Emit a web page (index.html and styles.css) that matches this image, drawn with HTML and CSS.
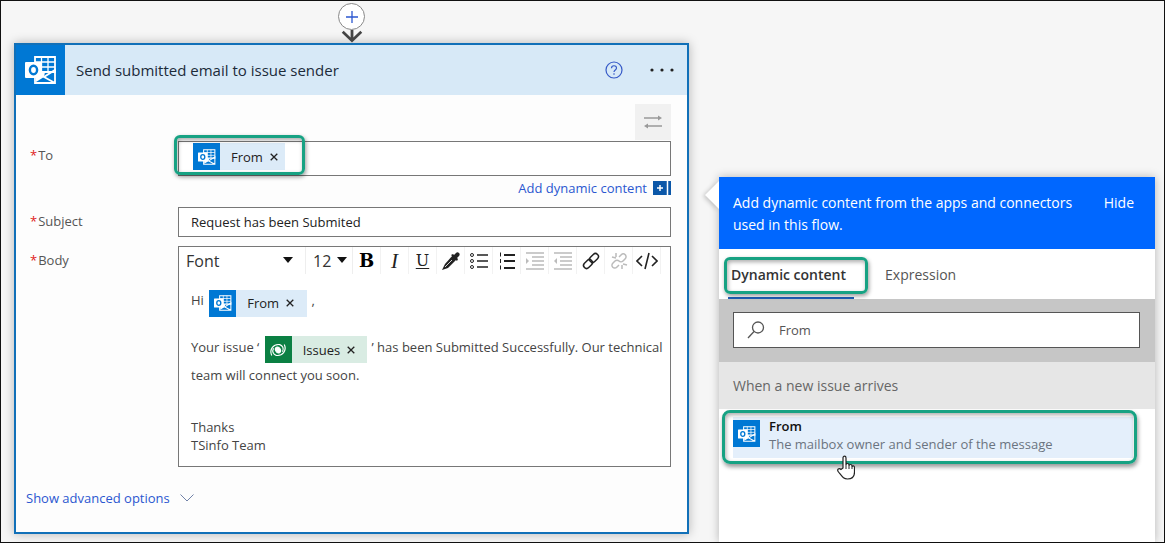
FILE: index.html
```html
<!DOCTYPE html>
<html lang="en">
<head>
<meta charset="utf-8">
<title>Send submitted email to issue sender</title>
<link rel="stylesheet" href="styles.css">
</head>
<body>
<svg class="sprite" aria-hidden="true">
  <symbol id="outlook" viewBox="0 0 32 32">
    <path d="M10 3h20v15H10z" fill="none" stroke="currentColor" stroke-width="1.800"/>
    <path d="M10 8h20M10 13h20M16.500 3v15M23 3v15" stroke="currentColor" stroke-width="1.300" fill="none"/>
    <path d="M10 18v11h20V16l-11 7 11 6" fill="none" stroke="currentColor" stroke-width="1.800"/>
    <path d="M11 18h9l-1 5-8 5z" fill="currentColor"/>
    <rect x="0" y="8" width="17" height="16" rx="1" fill="currentColor"/>
    <ellipse cx="8.500" cy="16" rx="3.600" ry="4.200" fill="none" stroke="var(--tile)" stroke-width="2.400"/>
  </symbol>
  <symbol id="cross" viewBox="0 0 8 8"><path d="M.7.7l6.600 6.600M7.300.7L.7 7.300" stroke="currentColor" stroke-width="1.300"/></symbol>
</svg>
<div class="canvas">
  <main class="flow">
    <div class="connector">
      <button class="add-step" aria-label="Insert a new step"><svg viewBox="0 0 12 12"><path d="M6 0v12M0 6h12" stroke="currentColor" stroke-width="1.300"/></svg></button>
      <svg class="arrow" viewBox="0 0 24 14"><path d="M12 0v11M2 2l10 9.500L22 2" fill="none" stroke="currentColor" stroke-width="3"/></svg>
    </div>
    <section class="card">
      <header class="card-head">
        <span class="tile tile-large"><svg><use href="#outlook"/></svg></span>
        <h1>Send submitted email to issue sender</h1>
        <button class="plain help" aria-label="Help"><svg viewBox="0 0 18 18" fill="none" stroke="currentColor" stroke-width="1.200"><circle cx="9" cy="9" r="8"/><path d="M6.500 7.200C6.500 4 11.500 4 11.500 7c0 2-2.500 1.900-2.500 4"/><path d="M9 12.300v1.500"/></svg></button>
        <button class="plain more" aria-label="More"><svg viewBox="0 0 24 4" fill="currentColor"><circle cx="2" cy="2" r="1.600"/><circle cx="12" cy="2" r="1.600"/><circle cx="22" cy="2" r="1.600"/></svg></button>
      </header>
      <div class="card-body">
        <div class="tools"><button class="swap" aria-label="Switch input mode"><svg viewBox="0 0 20 14" fill="none" stroke="currentColor" stroke-width="1.300"><path d="M1 3h16M3 11h16"/><path d="M15 .5L19 3l-4 2.500zM5 8.500L1 11l4 2.500z" fill="currentColor" stroke="none"/></svg></button></div>
        <div class="row">
          <span class="label"><i>*</i>To</span>
          <div class="field to-field" role="group" aria-label="To">
            <span class="token"><span class="tile"><svg><use href="#outlook"/></svg></span><span class="token-text">From</span><button class="plain remove" aria-label="Remove From"><svg><use href="#cross"/></svg></button></span>
          </div>
        </div>
        <div class="dynamic"><a href="#dynamic">Add dynamic content<svg viewBox="0 0 18 14"><path d="M0 0h18v14H0z" fill="#0b57a8"/><path d="M14.500 0v14" stroke="#fff" stroke-width="1.500"/><path d="M7 4v6M4 7h6" stroke="#fff" stroke-width="1.500"/></svg></a></div>
        <div class="row subject-row">
          <label class="label" for="subject"><i>*</i>Subject</label>
          <input class="field subject" id="subject" type="text" value="Request has been Submited">
        </div>
        <div class="row">
          <span class="label"><i>*</i>Body</span>
          <div class="field editor">
            <div class="toolbar">
              <span class="pick pick-font"><select aria-label="Font"><option>Font</option></select></span>
              <span class="pick pick-size"><select aria-label="Font size"><option>12</option></select></span>
              <button class="tool glyph bold" aria-label="Bold">B</button>
              <button class="tool glyph italic" aria-label="Italic">I</button>
              <button class="tool glyph underline" aria-label="Underline">U</button>
              <button class="tool" aria-label="Text color"><svg viewBox="0 0 20 20"><path d="M1 19l3-1 3-1L16 8l-4-4L4 13z" fill="currentColor"/><path d="M4 16L11 9" stroke="#fff" stroke-width=".8"/><path d="M10 4l6 6 1-2-1-1 2-2c2-2-1-5-3-3l-2 2-1-1z" fill="currentColor"/></svg></button>
              <button class="tool" aria-label="Bulleted list"><svg viewBox="0 0 20 20" fill="none" stroke="currentColor"><circle cx="3" cy="4" r="1.500"/><circle cx="3" cy="10" r="1.500"/><circle cx="3" cy="16" r="1.500"/><path d="M8 4h11M8 10h11M8 16h11" stroke-width="1.300"/></svg></button>
              <button class="tool" aria-label="Numbered list"><svg viewBox="0 0 20 20" fill="none" stroke="currentColor"><path d="M3.500 1.500v4M3.500 8v4M3.500 14.500v4"/><path d="M7 4h11M7 10h11M7 17h11" stroke-width="2"/></svg></button>
              <button class="tool off" aria-label="Outdent"><svg viewBox="0 0 20 20" fill="none" stroke="currentColor" stroke-width="1.500"><path d="M1 2h18M7 6h12M7 10h12M7 14h12M1 18h18"/><path d="M1 7l3 3-3 3z" fill="currentColor" stroke="none"/></svg></button>
              <button class="tool off" aria-label="Indent"><svg viewBox="0 0 20 20" fill="none" stroke="currentColor" stroke-width="1.500"><path d="M1 2h18M7 6h12M7 10h12M7 14h12M1 18h18"/><path d="M4 7l-3 3 3 3z" fill="currentColor" stroke="none"/></svg></button>
              <button class="tool" aria-label="Link"><svg viewBox="0 0 20 20" fill="none" stroke="currentColor" stroke-width="1.500"><rect x="-5" y="-3" width="10" height="6" rx="3" transform="translate(13 7) rotate(-45)"/><rect x="-5" y="-3" width="10" height="6" rx="3" transform="translate(7 13) rotate(-45)"/></svg></button>
              <button class="tool off" aria-label="Remove link"><svg viewBox="0 0 20 20" fill="none" stroke="currentColor" stroke-width="1.500"><path d="M10 6l2-2c3-3 7 1 4 4l-2 2c-1 1-3 1-4 0M10 14l-2 2c-3 3-7-1-4-4l2-2c1-1 3-1 4 0M3 6l4 1M7 2v4M13 14v4M14 13l4 1"/></svg></button>
              <button class="tool" aria-label="Code view"><svg class="code" viewBox="0 0 22 20" fill="none" stroke="currentColor" stroke-width="1.600"><path d="M6 5l-5 5 5 5M16 5l5 5-5 5M13 2L9 18"/></svg></button>
            </div>
            <div class="message" contenteditable="true" spellcheck="false" role="textbox" aria-label="Body">
              <p class="greeting">Hi <span class="token" contenteditable="false"><span class="tile"><svg><use href="#outlook"/></svg></span><span class="token-text">From</span><button class="plain remove" aria-label="Remove From"><svg><use href="#cross"/></svg></button></span> ,</p>
              <p class="detail">Your issue ‘ <span class="token token-green" contenteditable="false"><span class="tile"><svg viewBox="0 0 20 20" fill="none" stroke="currentColor" stroke-width="1.300"><path d="M3 16C0 9 5 3 12 4c3 1 5 4 3 8M17 4c3 7-2 13-9 12-3-1-5-4-3-8"/><ellipse cx="10" cy="10" rx="2.600" ry="3.400" transform="rotate(-30 10 10)" fill="currentColor"/></svg></span><span class="token-text">Issues</span><button class="plain remove" aria-label="Remove Issues"><svg><use href="#cross"/></svg></button></span> ’ has been Submitted Successfully. Our technical team will connect you soon.</p>
              <p>Thanks<br>TSinfo Team</p>
            </div>
          </div>
        </div>
        <a class="advanced" href="#advanced">Show advanced options<svg viewBox="0 0 14 8" fill="none" stroke="currentColor"><path d="M.5.5L7 7 13.500.5"/></svg></a>
      </div>
    </section>
  </main>
  <aside class="panel" id="dynamic">
    <header class="panel-head"><p>Add dynamic content from the apps and connectors used in this flow.</p><button class="plain">Hide</button></header>
    <nav class="tabs"><button class="plain tab current">Dynamic content</button><button class="plain tab">Expression</button></nav>
    <div class="search"><label class="search-box"><svg viewBox="0 0 18 18" fill="none" stroke="currentColor" stroke-width="1.300"><circle cx="11" cy="6.500" r="5.500"/><path d="M7 10.500L1 17"/></svg><input type="text" value="From" aria-label="Search dynamic content"></label></div>
    <h2>When a new issue arrives</h2>
    <button class="plain result">
      <span class="tile"><svg><use href="#outlook"/></svg></span>
      <span class="result-text"><b>From</b><span>The mailbox owner and sender of the message</span></span>
      <svg class="pointer" viewBox="0 0 18 25"><path d="M6 13V3c0-2.500 3-2.500 3 0v7c0-2 3-2 3 0v1c0-2 3-2 3 0v1c0-1.500 2.500-1.500 2.500.5V17c0 5-3 7-7 7-4 0-5-2-9-7-2-2.500.5-4.500 2.500-2.500z" fill="#fff" stroke="#222" stroke-width="1.200"/><path d="M9 10v4M12 11v3M15 12v2" stroke="#222"/></svg>
    </button>
  </aside>
</div>
</body>
</html>
```
FILE: styles.css
```css
:root {
  --blue: #0078d4;
  --link: #2b57d0;
  --mark: #17a283;
}
*, *::before, *::after { box-sizing: border-box; }
body {
  margin: 0;
  font-family: "Open Sans", "Noto Sans", sans-serif;
  font-size: 13px;
  color: #333;
}
h1, h2, p { margin: 0; font-weight: 400; }
button, input, select { font: inherit; color: inherit; }
button { cursor: pointer; }
svg { display: block; flex: none; }
a { color: var(--link); text-decoration: none; }
.sprite { position: absolute; width: 0; height: 0; }
.plain { border: 0; padding: 0; background: none; }

.canvas {
  display: flex;
  gap: 30px;
  min-height: 100vh;
  padding: 0 9px 0 13px;
  border: 1px solid #111;
  background: #f6f6f6;
}
.flow { flex: 1; min-width: 0; padding-bottom: 8px; }
.connector {
  display: flex;
  flex-direction: column;
  align-items: center;
  height: 42px;
  padding-top: 2px;
  color: #444;
}
.add-step {
  display: grid;
  place-items: center;
  width: 27px;
  height: 27px;
  padding: 0;
  border: 1px solid #888;
  border-radius: 50%;
  background: #fff;
  color: var(--link);
}
.add-step svg { width: 12px; }
.arrow { width: 24px; height: 13px; }

.card {
  border: 2px solid #1170b8;
  background: #fdfdfd;
  box-shadow: 0 0 10px #0004;
}
.card-head {
  display: flex;
  align-items: center;
  height: 50px;
  padding-right: 13px;
  background: #d7e9f7;
  color: #1c2b3a;
}
h1 { flex: 1; padding-left: 11px; font-size: 15px; }
.help { color: #3559c7; }
.help svg { width: 18px; }
.more { margin-left: 27px; color: #222; }
.more svg { width: 24px; }

.tile {
  --tile: var(--blue);
  display: grid;
  place-items: center;
  flex: none;
  width: 27px;
  height: 27px;
  background: var(--tile);
  color: #fff;
}
.tile svg { width: 18px; height: 18px; }
.tile-large { width: 49px; height: 50px; }
.tile-large svg { width: 32px; height: 32px; }

.card-body { padding: 9px 16px 25px 14px; }
.tools { display: flex; align-items: flex-start; justify-content: flex-end; height: 37px; }
.swap {
  display: grid;
  place-items: center;
  width: 36px;
  height: 36px;
  padding: 0;
  border: 0;
  background: #f1f1f1;
  color: #999;
}
.swap svg { width: 20px; }
.row { display: grid; grid-template-columns: 148px minmax(0, 1fr); }
.label { padding-top: 5px; line-height: 18px; color: #555; }
.label i { margin-right: 1px; font-style: normal; color: #e02020; }
.field { border: 1px solid #777; background: #fff; }
.to-field {
  position: relative;
  display: flex;
  height: 35px;
  padding: 1px 14px;
}
.to-field::after {
  content: "";
  position: absolute;
  inset: -7px auto 0 -5px;
  width: 131px;
  border: 3px solid var(--mark);
  border-radius: 6px;
  box-shadow: 1px 2px 4px #0006, inset 1px 2px 4px #0005;
  pointer-events: none;
}
.token {
  display: inline-flex;
  align-items: center;
  height: 27px;
  padding-right: 7px;
  background: #dcebf8;
  color: #222;
}
.token-text { padding: 0 7px 0 11px; }
.remove svg { width: 8px; height: 8px; }
.token-green { background: #d9ece3; }
.token-green .tile { --tile: #0b8043; }

.dynamic { display: flex; justify-content: flex-end; height: 31px; padding-top: 3px; }
.dynamic a { display: flex; align-items: center; gap: 6px; height: 18px; }
.dynamic svg { width: 18px; height: 14px; }
.subject-row { margin-bottom: 9px; }
.subject { width: 100%; height: 30px; padding: 0 12px; color: #222; }

.toolbar { display: flex; height: 27px; }
.pick { position: relative; display: flex; border-right: 1px solid #eee; }
.pick::after {
  content: "";
  position: absolute;
  top: 10px;
  right: 12px;
  border: 5px solid transparent;
  border-top: 6px solid #111;
  border-bottom: 0;
  pointer-events: none;
}
.pick-font { width: 127px; }
.pick-size { width: 47px; }
.pick-size::after { right: 5px; }
.pick select {
  appearance: none;
  width: 100%;
  padding: 0 0 0 7px;
  border: 0;
  background: none;
  font-size: 16px;
}
.tool {
  display: grid;
  place-items: center;
  flex: 0 0 28px;
  padding: 0;
  border: 0;
  border-right: 1px solid #f2f2f2;
  background: none;
  color: #222;
}
.tool svg { width: 20px; height: 20px; }
.tool .code { width: 22px; }
.off { color: #bbb; }
.glyph { font-family: "DejaVu Serif", serif; font-size: 18px; line-height: 20px; }
.bold { font-weight: 700; color: #000; }
.italic { font-family: "Liberation Serif", serif; font-size: 21px; font-style: italic; }
.underline { font-size: 16px; text-decoration: underline; text-underline-offset: 2px; }

.message { padding: 14px 1px 12px 12px; line-height: 18px; color: #444; outline: 0; }
.message .token { margin: 0 1px 0 2px; vertical-align: -7px; }
.message .remove { padding: 0 6px 0 0; }
.message .greeting { margin-bottom: 18px; line-height: 24px; }
.message .detail { margin-bottom: 31px; line-height: 24px; }
.message .token-green .remove { padding-right: 5px; }
.advanced { display: inline-flex; align-items: center; gap: 10px; margin: 22px 0 0 -4px; line-height: 18px; }
.advanced svg { width: 14px; color: #7182a8; }

.panel {
  position: relative;
  flex: 0 1 436px;
  margin-top: 176px;
  background: #fff;
  box-shadow: 0 0 9px #0004;
}
.panel::before {
  content: "";
  position: absolute;
  top: 4px;
  left: -14px;
  border: 14px solid transparent;
  border-left: 0;
  border-right-color: #fff;
  filter: drop-shadow(-2px 1px 2px #0003);
}
.panel-head {
  position: relative;
  display: flex;
  align-items: flex-start;
  justify-content: space-between;
  padding: 15px 21px 13px 14px;
  background: #0067ff;
  color: #fff;
  font-size: 14px;
  line-height: 22px;
}
.panel-head p { width: 350px; }
.tabs { display: flex; gap: 28px; height: 50px; padding-left: 9px; font-size: 14px; }
.tab { position: relative; padding: 0 0 0 3px; color: #555; }
.current { padding-right: 8px; font-weight: 600; color: #333; }
.current::before {
  content: "";
  position: absolute;
  inset: auto 0 0 0;
  height: 2px;
  background: #1f5fb8;
}
.current::after {
  content: "";
  position: absolute;
  inset: 8px -14px 5px -4px;
  border: 3px solid var(--mark);
  border-radius: 6px;
  box-shadow: 1px 2px 4px #0006, inset 1px 2px 4px #0005;
}
.search { padding: 13px 15px 14px 14px; background: #c6c6c6; }
.search-box {
  display: flex;
  align-items: center;
  gap: 14px;
  height: 36px;
  padding-left: 13px;
  border: 1px solid #555;
  background: #fff;
  color: #555;
}
.search-box svg { width: 18px; }
.search-box input { flex: 1; min-width: 0; border: 0; padding: 0; outline: 0; background: none; }
h2 { padding: 0 14px; background: #e6e6e6; font-size: 14px; line-height: 47px; color: #666; }
.result {
  position: relative;
  display: flex;
  align-items: flex-start;
  gap: 9px;
  width: calc(100% - 36px);
  margin: 8px 0 0 14px;
  padding-bottom: 5px;
  background: #e4effb;
  text-align: left;
}
.result .tile { margin-top: 3px; }
.result::before {
  content: "";
  position: absolute;
  inset: -7px -4px -6px -11px;
  border: 3px solid var(--mark);
  border-radius: 8px;
  box-shadow: 1px 3px 4px #0006, inset 1px 2px 4px #0005;
}
.result-text { display: flex; flex-direction: column; line-height: 18px; color: #6b7480; }
.result b { font-weight: 600; color: #111; }
.pointer { position: absolute; top: 38px; left: 104px; width: 18px; height: 25px; }
```
